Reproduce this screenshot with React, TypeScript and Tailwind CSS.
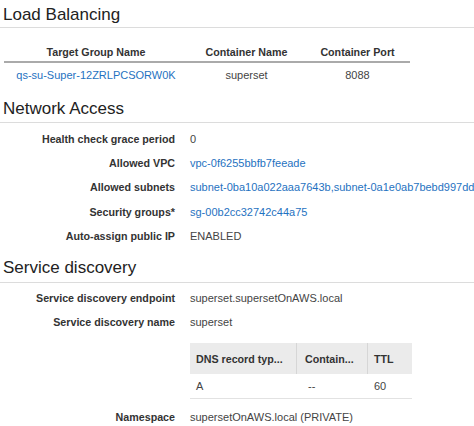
const lbRows = [{ group: 'qs-su-Super-12ZRLPCSORW0K', container: 'superset', port: '8088' }]

const network = [
  { label: 'Health check grace period', value: '0' },
  { label: 'Allowed VPC', value: 'vpc-0f6255bbfb7feeade', link: true },
  { label: 'Allowed subnets', value: 'subnet-0ba10a022aaa7643b,subnet-0a1e0ab7bebd997dd', link: true },
  { label: 'Security groups*', value: 'sg-00b2cc32742c44a75', link: true },
  { label: 'Auto-assign public IP', value: 'ENABLED' },
]

const discovery = [
  { label: 'Service discovery endpoint', value: 'superset.supersetOnAWS.local' },
  { label: 'Service discovery name', value: 'superset' },
]

function Title({ children, className }: { children: string; className: string }) {
  return (
    <h2 className={`border-b border-[#dcdcdc] pl-[3px] text-[17px] leading-[20px] text-[#222] ${className}`}>
      {children}
    </h2>
  )
}

function Row({ label, value, link }: { label: string; value: string; link?: boolean }) {
  return (
    <div className="grid grid-cols-[175px_1fr] items-baseline gap-x-[15px] leading-[24.4px]">
      <span className="text-right text-[10.7px] font-bold text-[#333]">{label}</span>
      <span className={`whitespace-nowrap text-[11px] ${link ? 'text-[#1f72c1]' : 'text-[#444]'}`}>{value}</span>
    </div>
  )
}

export default function App() {
  return (
    <div className="h-[426px] w-[474px] overflow-hidden bg-white font-['Liberation_Sans',Arial,sans-serif] text-[11px] text-[#444]">
      <Title className="pt-[4.8px] pb-[2.2px]">Load Balancing</Title>

      {/* target group table */}
      <div className="ml-[4px] w-[406px]">
        <div className="grid grid-cols-[184px_117px_105px] border-b-2 border-[#aaaaaa] pt-[16px] pb-[1.5px] text-center text-[10.7px] font-bold leading-[16px] text-[#333]">
          <span>Target Group Name</span>
          <span>Container Name</span>
          <span>Container Port</span>
        </div>
        {lbRows.map((r) => (
          <div key={r.group} className="grid grid-cols-[184px_117px_105px] text-center leading-[24px]">
            <span className="text-[#1f72c1]">{r.group}</span>
            <span>{r.container}</span>
            <span>{r.port}</span>
          </div>
        ))}
      </div>

      <Title className="pt-[11.6px] pb-[2.6px]">Network Access</Title>
      <div className="pt-[4px]">
        {network.map((r) => (
          <Row key={r.label} {...r} />
        ))}
      </div>

      <Title className="pt-[9.7px] pb-[3.3px]">Service discovery</Title>
      <div className="pt-[2.9px]">
        {discovery.map((r) => (
          <Row key={r.label} {...r} />
        ))}
      </div>

      {/* dns records */}
      <div className="ml-[190px] mt-[9px] w-[222px]">
        <div className="grid h-[30.5px] grid-cols-[106px_71px_1fr] items-center bg-[#ebebeb] text-[10.7px] font-bold text-[#333]">
          <span className="pl-[6px]">DNS record typ...</span>
          <span className="flex h-full items-center border-l border-[#d6d6d6] pl-[8px]">Contain...</span>
          <span className="flex h-full items-center border-l border-[#d6d6d6] pl-[6px]">TTL</span>
        </div>
        <div className="grid h-[25.4px] grid-cols-[106px_71px_1fr] items-center border-b border-[#e2e2e2]">
          <span className="pl-[6px]">A</span>
          <span className="pl-[12px]">--</span>
          <span className="pl-[7px]">60</span>
        </div>
      </div>

      <div className="mt-[5.3px]">
        <Row label="Namespace" value="supersetOnAWS.local (PRIVATE)" />
      </div>
    </div>
  )
}
